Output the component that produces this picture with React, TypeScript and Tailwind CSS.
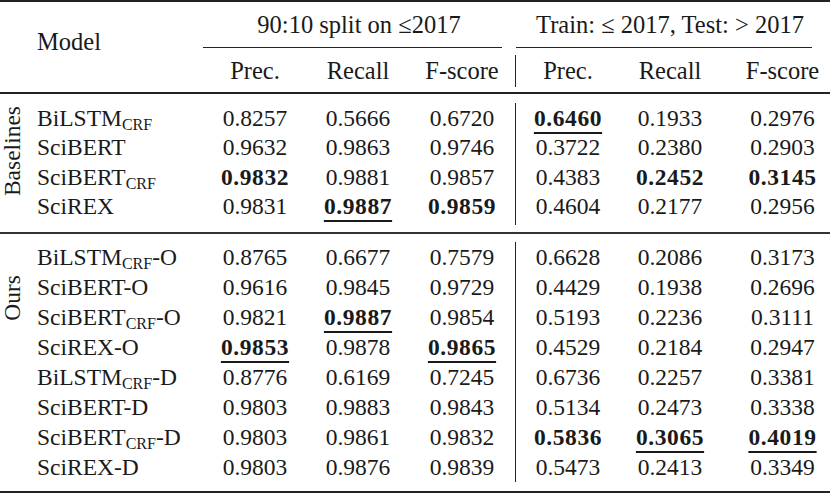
type Row = { name: string; sub?: string; suffix?: string; left: string[]; right: string[] };

// "B" prefix = bold, "U" prefix = bold + underline
const baselines: Row[] = [
  { name: "BiLSTM", sub: "CRF", left: ["0.8257", "0.5666", "0.6720"], right: ["U0.6460", "0.1933", "0.2976"] },
  { name: "SciBERT", left: ["0.9632", "0.9863", "0.9746"], right: ["0.3722", "0.2380", "0.2903"] },
  { name: "SciBERT", sub: "CRF", left: ["B0.9832", "0.9881", "0.9857"], right: ["0.4383", "B0.2452", "B0.3145"] },
  { name: "SciREX", left: ["0.9831", "U0.9887", "B0.9859"], right: ["0.4604", "0.2177", "0.2956"] },
];

const ours: Row[] = [
  { name: "BiLSTM", sub: "CRF", suffix: "-O", left: ["0.8765", "0.6677", "0.7579"], right: ["0.6628", "0.2086", "0.3173"] },
  { name: "SciBERT", suffix: "-O", left: ["0.9616", "0.9845", "0.9729"], right: ["0.4429", "0.1938", "0.2696"] },
  { name: "SciBERT", sub: "CRF", suffix: "-O", left: ["0.9821", "U0.9887", "0.9854"], right: ["0.5193", "0.2236", "0.3111"] },
  { name: "SciREX", suffix: "-O", left: ["U0.9853", "0.9878", "U0.9865"], right: ["0.4529", "0.2184", "0.2947"] },
  { name: "BiLSTM", sub: "CRF", suffix: "-D", left: ["0.8776", "0.6169", "0.7245"], right: ["0.6736", "0.2257", "0.3381"] },
  { name: "SciBERT", suffix: "-D", left: ["0.9803", "0.9883", "0.9843"], right: ["0.5134", "0.2473", "0.3338"] },
  { name: "SciBERT", sub: "CRF", suffix: "-D", left: ["0.9803", "0.9861", "0.9832"], right: ["B0.5836", "U0.3065", "U0.4019"] },
  { name: "SciREX", suffix: "-D", left: ["0.9803", "0.9876", "0.9839"], right: ["0.5473", "0.2413", "0.3349"] },
];

function Num({ v }: { v: string }) {
  if (v.startsWith("U"))
    return <span className="font-bold tracking-[0.6px] underline decoration-[1.5px] underline-offset-[6px]">{v.slice(1)}</span>;
  if (v.startsWith("B")) return <span className="font-bold tracking-[0.6px]">{v.slice(1)}</span>;
  return <span>{v}</span>;
}

type SectionProps = { label: string; labelPad: string; rows: Row[]; top: string; bottom: string; rowH: string; grid: string };

function Section({ label, labelPad, rows, top, bottom, rowH, grid }: SectionProps) {
  return (
    <div className={`flex ${top}`}>
      <div className={`w-[25px] flex items-start justify-center ${labelPad}`}>
        <span className="rotate-180 leading-none [writing-mode:vertical-rl]">{label}</span>
      </div>
      <div className={`w-[178px] pl-[12px] ${bottom}`}>
        {rows.map((r, i) => (
          <div key={i} className={`flex items-center whitespace-nowrap ${rowH}`}>
            <span>
              {r.name}
              {r.sub ? <sub className="text-[16px]">{r.sub}</sub> : null}
              {r.suffix}
            </span>
          </div>
        ))}
      </div>
      <div className={`w-[312px] grid grid-cols-[104px_102px_106px] content-start ${grid} ${bottom}`}>
        {rows.map((r, i) =>
          r.left.map((v, j) => (
            <div key={`${i}-${j}`} className="flex items-center justify-center">
              <Num v={v} />
            </div>
          ))
        )}
      </div>
      <div className={`w-[317px] border-l border-[#222] grid grid-cols-[104px_100px_113px] content-start ${grid} ${bottom}`}>
        {rows.map((r, i) =>
          r.right.map((v, j) => (
            <div key={`${i}-${j}`} className={`flex items-center justify-center ${j === 2 ? "pl-[12px]" : ""}`}>
              <Num v={v} />
            </div>
          ))
        )}
      </div>
    </div>
  );
}

export default function App() {
  return (
    <div className="w-[832px] h-[503px] bg-white text-[#1a1a1a] [font-family:Liberation_Serif,Times_New_Roman,serif] text-[23.5px] leading-[30px] overflow-hidden">
      <div className="h-[2px] w-[830px] bg-[#222]" />
      <div className="flex h-[90px] text-[24.5px]">
        <div className="w-[203px] pl-[37px] pt-[25px]">Model</div>
        <div className="w-[312px] flex flex-col">
          <div className="h-[45px] pt-[8px] text-center">90:10 split on ≤2017</div>
          <div className="h-px mr-[13px] bg-[#222]" />
          <div className="mt-[7px] h-[32px] grid grid-cols-[104px_102px_106px] leading-[32px] text-center">
            <div>Prec.</div>
            <div>Recall</div>
            <div>F-score</div>
          </div>
        </div>
        <div className="w-[317px] flex flex-col">
          <div className="h-[45px] pt-[8px] pr-[7px] text-center whitespace-nowrap">Train: ≤ 2017, Test: &gt; 2017</div>
          <div className="h-px ml-[1px] mr-[20px] bg-[#222]" />
          <div className="mt-[7px] h-[32px] border-l border-[#222] grid grid-cols-[104px_100px_113px] leading-[32px] text-center">
            <div>Prec.</div>
            <div>Recall</div>
            <div className="pl-[12px]">F-score</div>
          </div>
        </div>
      </div>
      <div className="h-[2px] w-[830px] bg-[#222]" />
      <Section
        label="Baselines"
        labelPad="pt-[3px]"
        rows={baselines}
        top="mt-[8px] pt-[1px]"
        bottom="pb-[4px]"
        rowH="h-[29.5px]"
        grid="auto-rows-[29.5px]"
      />
      <div className="mt-[7px] h-[2px] w-[830px] bg-[#333]" />
      <Section
        label="Ours"
        labelPad="pt-[33px]"
        rows={ours}
        top="mt-[8px]"
        bottom="pb-0"
        rowH="h-[30px]"
        grid="auto-rows-[30px]"
      />
      <div className="mt-[9px] h-[2px] w-[830px] bg-[#222]" />
    </div>
  );
}
